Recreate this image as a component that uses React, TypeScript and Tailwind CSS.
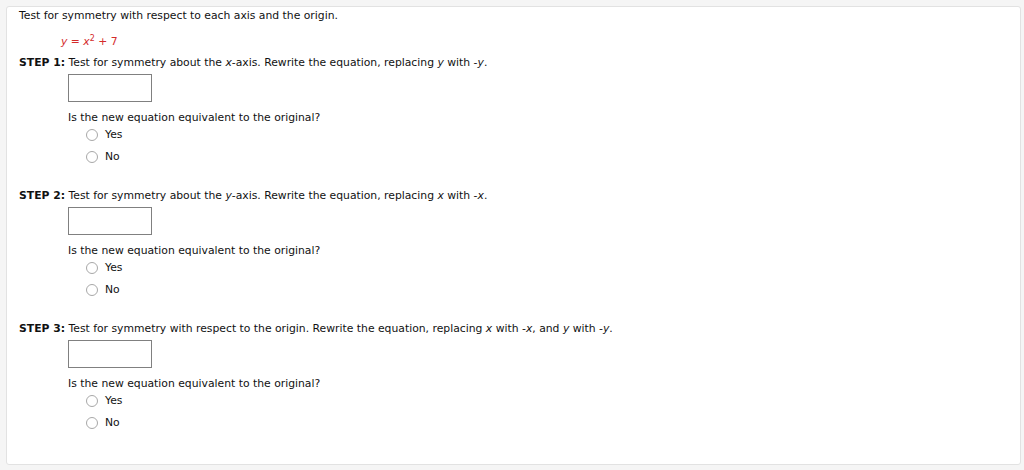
import React from "react";

interface Step {
  num: number;
  text: React.ReactNode;
}

const steps: Step[] = [
  {
    num: 1,
    text: (
      <>
        Test for symmetry about the <i>x</i>-axis. Rewrite the equation, replacing <i>y</i> with -<i>y</i>.
      </>
    ),
  },
  {
    num: 2,
    text: (
      <>
        Test for symmetry about the <i>y</i>-axis. Rewrite the equation, replacing <i>x</i> with -<i>x</i>.
      </>
    ),
  },
  {
    num: 3,
    text: (
      <>
        Test for symmetry with respect to the origin. Rewrite the equation, replacing <i>x</i> with -<i>x</i>, and <i>y</i> with -<i>y</i>.
      </>
    ),
  },
];

function Radio({ label }: { label: string }) {
  return (
    <label className="flex h-[16px] items-center ml-[67px]">
      <span className="w-[12px] h-[12px] rounded-full border border-[#a8a8a8] bg-white" />
      <span className="ml-[7px]">{label}</span>
    </label>
  );
}

function StepBlock({ step, first }: { step: Step; first: boolean }) {
  return (
    <div className={first ? "mt-[5px]" : "mt-[23px]"}>
      <div>
        <b>STEP {step.num}:</b> {step.text}
      </div>
      <div className="mt-[3px] ml-[49px] w-[84px] h-[28px] border border-[#808080] bg-white" />
      <div className="mt-[8px] ml-[49px]">Is the new equation equivalent to the original?</div>
      <div className="mt-[1px] flex flex-col gap-[6px]">
        <Radio label="Yes" />
        <Radio label="No" />
      </div>
    </div>
  );
}

export default function App() {
  return (
    <div
      className="min-h-[470px] bg-[#f5f5f5] pt-[6px] px-[6px] text-[10.8px] leading-[16px] text-[#111]"
      style={{ fontFamily: '"DejaVu Sans", Verdana, sans-serif' }}
    >
      <div className="bg-white border border-[#e2e2e2] rounded-[3px] pl-[12px] pt-[1px] pb-[33px] mr-[-3px]">
        <div>Test for symmetry with respect to each axis and the origin.</div>
        <div className="mt-[10px] ml-[42px] text-[#d42a2a]">
          <i>y</i> = <i>x</i>
          <sup className="text-[8px]">2</sup> + 7
        </div>
        {steps.map((s, i) => (
          <StepBlock key={s.num} step={s} first={i === 0} />
        ))}
      </div>
    </div>
  );
}
